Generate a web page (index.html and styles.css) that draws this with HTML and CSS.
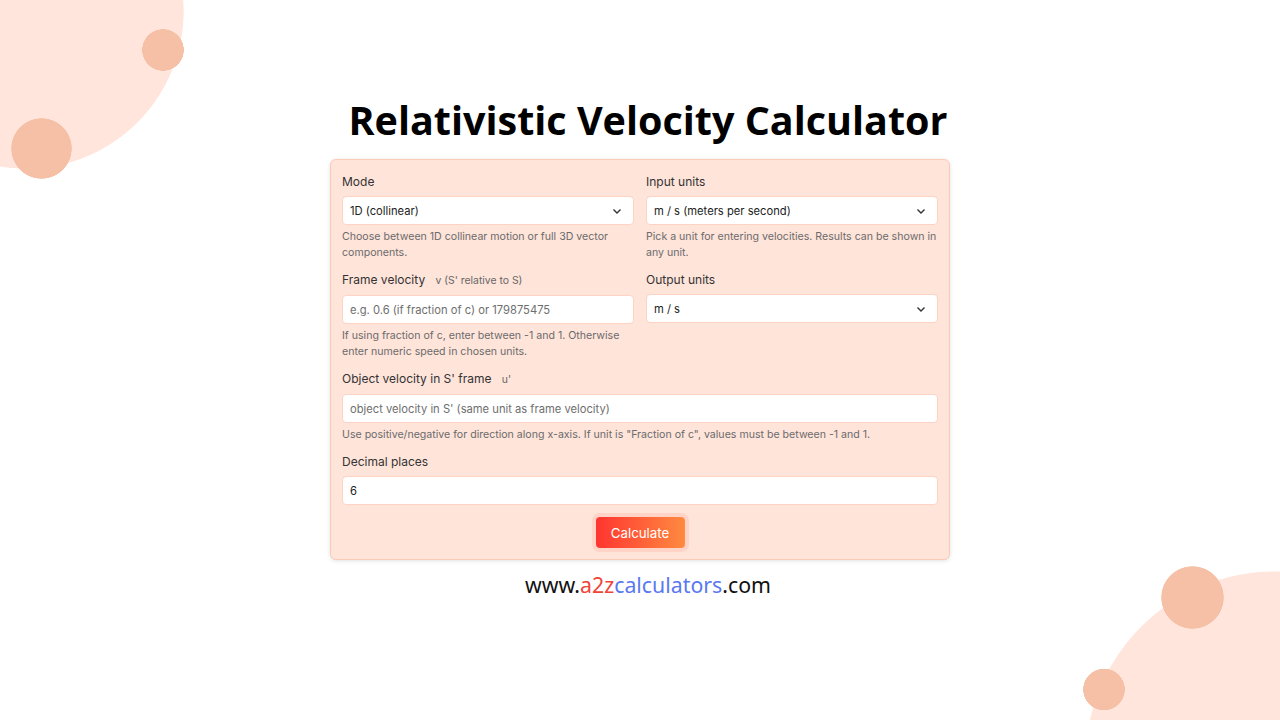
FILE: index.html
```html
<!DOCTYPE html>
<html lang="en">
<head>
  <meta charset="UTF-8">
  <meta name="viewport" content="width=device-width, initial-scale=1.0">
  <title>Relativistic Velocity Calculator</title>
  <link rel="stylesheet" href="styles.css">
</head>
<body>

<div class="backdrop"></div>

<main class="page">
  <h1 class="title">Relativistic Velocity Calculator</h1>

  <form class="card" onsubmit="return false;">
    <div class="grid">
      <div class="field">
        <label class="label">Mode</label>
        <div class="select">
          <span>1D (collinear)</span>
          <svg class="chev" viewBox="0 0 12 12"><path d="M2.5 4.5 L6 8 L9.5 4.5"/></svg>
        </div>
        <p class="help">Choose between 1D collinear motion or full 3D vector components.</p>
      </div>

      <div class="field">
        <label class="label">Input units</label>
        <div class="select">
          <span>m / s (meters per second)</span>
          <svg class="chev" viewBox="0 0 12 12"><path d="M2.5 4.5 L6 8 L9.5 4.5"/></svg>
        </div>
        <p class="help">Pick a unit for entering velocities. Results can be shown in any unit.</p>
      </div>

      <div class="field">
        <label class="label">Frame velocity <span class="sub">v (S' relative to S)</span></label>
        <input class="input" type="text" placeholder="e.g. 0.6 (if fraction of c) or 179875475">
        <p class="help">If using fraction of c, enter between -1 and 1. Otherwise enter numeric speed in chosen units.</p>
      </div>

      <div class="field">
        <label class="label">Output units</label>
        <div class="select">
          <span>m / s</span>
          <svg class="chev" viewBox="0 0 12 12"><path d="M2.5 4.5 L6 8 L9.5 4.5"/></svg>
        </div>
      </div>

      <div class="field wide">
        <label class="label">Object velocity in S' frame <span class="sub">u'</span></label>
        <input class="input" type="text" placeholder="object velocity in S' (same unit as frame velocity)">
        <p class="help">Use positive/negative for direction along x-axis. If unit is "Fraction of c", values must be between -1 and 1.</p>
      </div>

      <div class="field wide">
        <label class="label">Decimal places</label>
        <input class="input" type="text" value="6">
      </div>
    </div>

    <div class="actions">
      <button class="btn" type="submit">Calculate</button>
    </div>
  </form>

  <p class="site">www.<span class="red">a2z</span><span class="blue">calculators</span>.com</p>
</main>

</body>
</html>
```

FILE: styles.css
```css
body {
  margin: 0;
  padding: 0;
  background: #ffffff;
  font-family: Inter, 'Noto Sans', sans-serif;
  overflow: hidden;
  height: 720px;
  position: relative;
}

/* Background decoration: soft blobs and dots in the corners */
.backdrop {
  position: absolute;
  left: 0;
  top: 0;
  width: 1280px;
  height: 720px;
  background:
    radial-gradient(circle 21px at 163px 50px, #f5c0a5 98%, transparent 100%),
    radial-gradient(circle 30.5px at 41.5px 148.5px, #f5c0a5 98%, transparent 100%),
    radial-gradient(circle 31.5px at 1192.5px 597.5px, #f5c0a5 98%, transparent 100%),
    radial-gradient(circle 21px at 1104px 689.5px, #f5c0a5 98%, transparent 100%),
    radial-gradient(circle 158px at 26px 11px, #ffe5db 99.5%, transparent 100%),
    radial-gradient(circle 190px at 1275px 761px, #ffe5db 99.5%, transparent 100%);
}

/* Main column */
.page {
  position: relative;
  width: 620px;
  margin: 0 auto;
  padding-top: 94px;
}

.title {
  margin: 0 0 13px;
  text-align: center;
  font-family: 'Open Sans', sans-serif;
  font-weight: 700;
  font-size: 39.5px;
  line-height: 52px;
  color: #000;
  padding-left: 16px;
}

/* Card */
.card {
  background-color: #ffe4da;
  border: 1px solid #fbcbb8;
  border-radius: 6px;
  box-shadow: 0 1px 4px rgba(0, 0, 0, 0.12);
  padding: 12px 11px 11px;
}

.grid {
  display: grid;
  grid-template-columns: 1fr 1fr;
  column-gap: 12px;
  row-gap: 9px;
}

.wide {
  grid-column: 1 / span 2;
}

.label {
  display: block;
  font-size: 12px;
  line-height: 20px;
  color: #333;
  margin-bottom: 4px;
}

.sub {
  font-size: 10.4px;
  color: #666;
  margin-left: 7px;
}

.select, .input {
  box-sizing: border-box;
  width: 100%;
  height: 29px;
  background-color: #fff;
  border: 1px solid #fdd3c3;
  border-radius: 4px;
  font-family: Inter, 'Noto Sans', sans-serif;
  font-size: 11.2px;
  color: #222;
}

.select {
  display: flex;
  align-items: center;
  justify-content: space-between;
  padding: 0 10px 0 7px;
}

.input {
  display: block;
  padding: 0 7px;
  outline: none;
}

.input::placeholder {
  color: #6e6e6e;
}

.chev {
  width: 12px;
  height: 12px;
  fill: none;
  stroke: #333;
  stroke-width: 1.4;
}

.help {
  margin: 4px 0 0;
  font-size: 10.6px;
  line-height: 16px;
  color: #6b6b6b;
}

/* Button */
.actions {
  display: flex;
  justify-content: center;
  margin-top: 12px;
}

.btn {
  border: none;
  border-radius: 4px;
  background: linear-gradient(90deg, #ff3530, #ff8a40);
  color: #fff;
  font-family: Inter, 'Noto Sans', sans-serif;
  font-size: 13.3px;
  width: 89px;
  height: 31px;
  box-shadow: 0 0 0 4px rgba(255, 120, 90, 0.15);
  cursor: pointer;
}

/* Footer site name */
.site {
  margin: 10px 0 0;
  padding-left: 16px;
  text-align: center;
  font-family: 'Noto Sans', sans-serif;
  font-size: 21.3px;
  color: #111;
}

.red {
  color: #f04438;
}

.blue {
  color: #5a78f0;
}
```
